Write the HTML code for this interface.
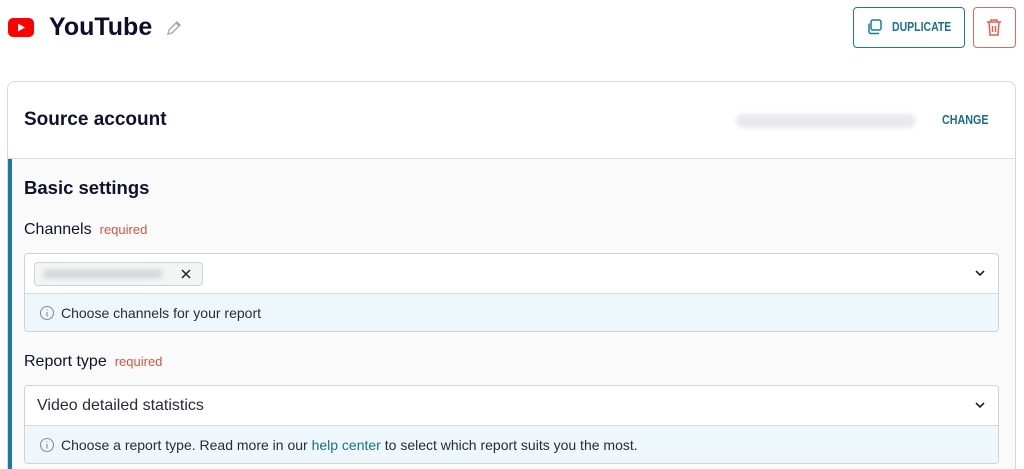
<!DOCTYPE html>
<html><head><meta charset="utf-8"><style>
*{box-sizing:border-box;margin:0;padding:0}
html,body{width:1024px;height:469px;overflow:hidden}
body{background:#fff;font-family:"Liberation Sans",sans-serif;color:#11112b;position:relative}
.abs{position:absolute}
.title{left:49px;top:13px;font-size:25px;font-weight:bold;color:#0e0e2c}
.btn{border-radius:4px;background:#fff}
.card{left:7px;top:81px;width:1009px;height:388px;border:1px solid #d6d8dc;border-bottom:none;border-radius:8px 8px 0 0;overflow:hidden;background:#fafafa}
.hdr{position:absolute;left:0;top:0;right:0;height:77px;background:#fff;border-bottom:1px solid #dcdde0}
.bar{position:absolute;left:0;top:77px;width:4px;bottom:0;background:#1a7ba0}
.field{position:absolute;left:16px;width:975px;border:1px solid #cfd3d8;border-radius:4px;overflow:hidden;background:#fff}
.field .top{height:40px;border-bottom:1px solid #d6d9dd;position:relative}
.field .hint{height:37px;background:#eef7fb;font-size:14px;color:#2a2a3c;display:flex;align-items:center;padding-left:14px;gap:6px}
.lbl{position:absolute;left:16px;font-size:16px;color:#11112b}
.req{font-size:13px;color:#d4553f;margin-left:8px}
.chev{position:absolute;right:12px;top:14px}
</style></head><body>
<svg class="abs" style="left:8px;top:18px" width="26" height="19" viewBox="0 0 26 19"><rect width="26" height="19" rx="5" fill="#f00"/><path d="M10 5.5L17 9.5L10 13.5Z" fill="#fff"/></svg>
<div class="abs title">YouTube</div>
<svg class="abs" style="left:165px;top:19px" width="18" height="18" viewBox="0 0 18 18" fill="none" stroke="#a5a9b5" stroke-width="1.4"><path d="M3 15l1-4L12 3l3 3-8 8z M11 4l3 3"/></svg>
<div class="abs btn" style="left:853px;top:7px;width:112px;height:41px;border:1.5px solid #1a7ba0"></div>
<svg class="abs" style="left:866px;top:19px" width="16" height="17" viewBox="0 0 16 17" fill="none" stroke="#1a7ba0" stroke-width="1.5"><rect x="5" y="1" width="10" height="10" rx="2"/><path d="M3 4.5v8a2 2 0 0 0 2 2h8"/></svg>
<div class="abs" style="left:892px;top:20px;font-size:12.5px;font-weight:bold;color:#1a6f90;transform:scaleX(.84);transform-origin:left">DUPLICATE</div>
<div class="abs btn" style="left:973px;top:7px;width:43px;height:41px;border:1.5px solid #de6a5a"></div>
<svg class="abs" style="left:986px;top:18px" width="16" height="19" viewBox="0 0 16 19" fill="none" stroke="#e0614f" stroke-width="1.5"><path d="M1 4h14M5 4V2h6v2M3 4l1 13h8l1-13M6.5 8v6M9.5 8v6"/></svg>
<div class="abs card">
 <div class="hdr">
  <div class="abs" style="left:16px;top:27px;font-size:19px;font-weight:bold">Source account</div>
  <div class="abs" style="left:728px;top:32px;width:180px;height:14px;background:#e9e9eb;border-radius:7px;filter:blur(2px)"></div>
  <div class="abs" style="left:934px;top:31px;font-size:12.5px;font-weight:bold;color:#1a6f90;transform:scaleX(.86);transform-origin:left">CHANGE</div>
 </div>
 <div class="bar"></div>
 <div class="abs" style="left:16px;top:95px;font-size:18.5px;font-weight:bold">Basic settings</div>
 <div class="lbl" style="top:139px">Channels<span class="req">required</span></div>
 <div class="field" style="top:171px">
  <div class="top">
   <div class="abs" style="left:9px;top:8px;width:169px;height:24px;border:1px solid #cfd3d8;border-radius:4px;background:#f3f4f6"></div>
   <div class="abs" style="left:18px;top:15px;width:120px;height:10px;background:#d8d9dc;border-radius:5px;filter:blur(2px)"></div>
   <svg class="abs" style="left:156px;top:15px" width="10" height="10" viewBox="0 0 10 10" stroke="#222" stroke-width="1.5"><path d="M1 1l8 8M9 1l-8 8"/></svg>
   <svg class="chev" width="12" height="10" viewBox="0 0 12 10" fill="none" stroke="#222" stroke-width="1.6"><path d="M2 3l4 4 4-4"/></svg>
  </div>
  <div class="hint"><svg width="16" height="16" viewBox="0 0 16 16" fill="none" stroke="#8a8d96" stroke-width="1.1"><circle cx="8" cy="8" r="6.5"/><path d="M8 7v4.5M8 4.6v.8"/></svg>Choose channels for your report</div>
 </div>
 <div class="lbl" style="top:271px">Report type<span class="req">required</span></div>
 <div class="field" style="top:303px">
  <div class="top"><div class="abs" style="left:12px;top:11px;font-size:16px;color:#2a2a3c">Video detailed statistics</div>
   <svg class="chev" width="12" height="10" viewBox="0 0 12 10" fill="none" stroke="#222" stroke-width="1.6"><path d="M2 3l4 4 4-4"/></svg></div>
  <div class="hint"><svg width="16" height="16" viewBox="0 0 16 16" fill="none" stroke="#8a8d96" stroke-width="1.1"><circle cx="8" cy="8" r="6.5"/><path d="M8 7v4.5M8 4.6v.8"/></svg><span>Choose a report type. Read more in our <span style="color:#1a6f90">help center</span> to select which report suits you the most.</span></div>
 </div>
</div>
</body></html>
